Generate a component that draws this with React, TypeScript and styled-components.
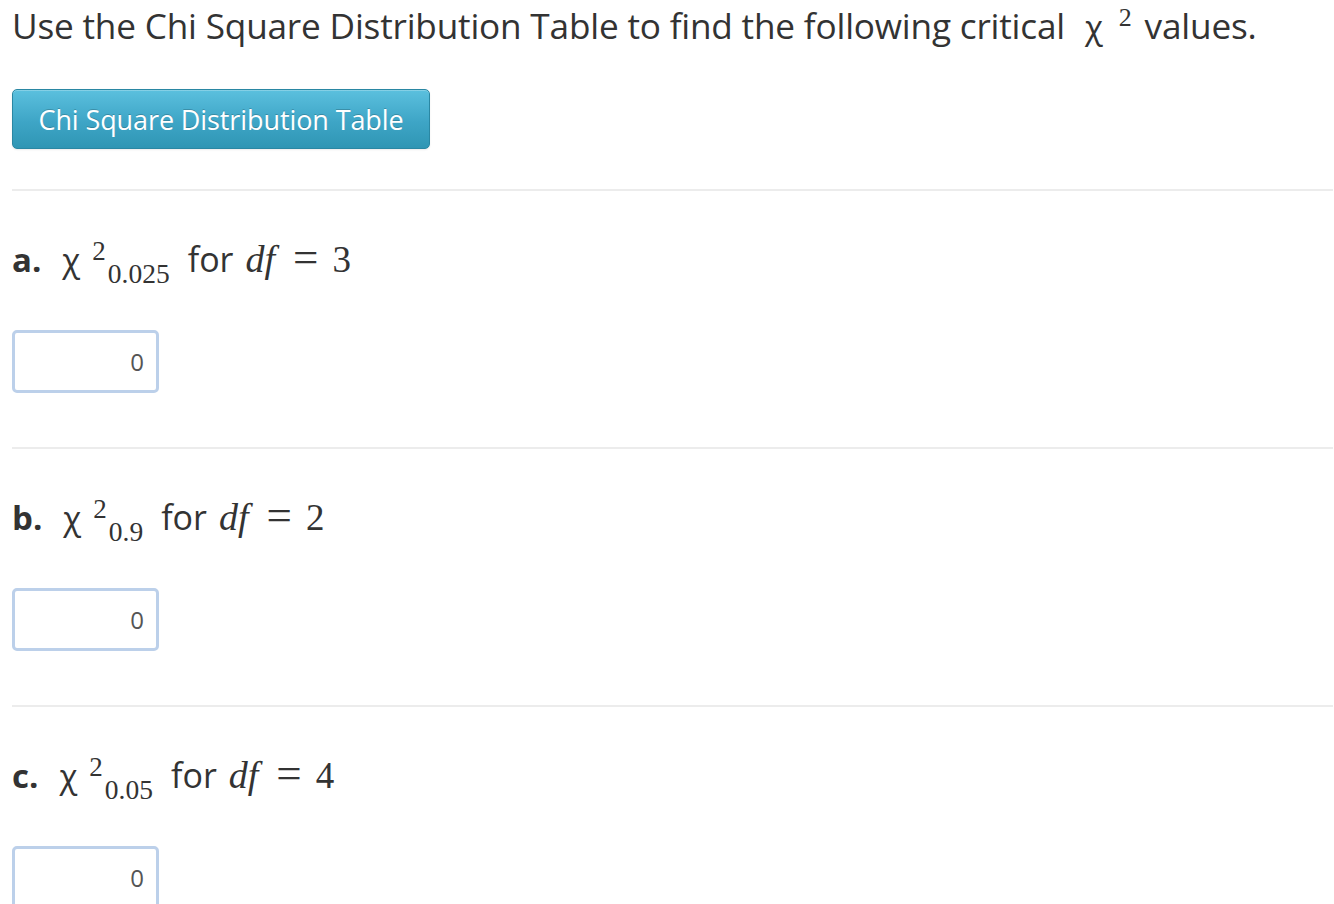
import styled, { createGlobalStyle } from "styled-components";

const GlobalStyle = createGlobalStyle`
  html, body {
    margin: 0;
    padding: 0;
    background: #fff;
  }
  body {
    font-family: "Open Sans", "Liberation Sans", sans-serif;
    color: #333;
  }
`;

const Page = styled.div`
  padding: 0 1px 0 12px;
  box-sizing: border-box;
`;

const Title = styled.h1`
  margin: 0;
  padding-top: 3px;
  font-size: 35.2px;
  font-weight: 400;
  line-height: 44px;
  color: #333;
  letter-spacing: -0.2px;
  display: flex;
  align-items: baseline;
  white-space: nowrap;
`;

const TableButton = styled.button`
  margin-top: 36px;
  width: 418px;
  height: 60px;
  border: 1px solid #2a87a3;
  border-radius: 5px;
  background: linear-gradient(to bottom, #5bc0de 0%, #3ea5c6 55%, #2f96b4 100%);
  box-shadow: inset 0 1px 0 rgba(255, 255, 255, 0.25), 0 1px 2px rgba(0, 0, 0, 0.08);
  color: #fff;
  font-family: "Open Sans", "Liberation Sans", sans-serif;
  font-size: 27px;
  letter-spacing: -0.1px;
  text-shadow: 0 -1px 0 rgba(0, 0, 0, 0.2);
  cursor: pointer;
  padding: 0;
  display: block;
`;

const Section = styled.section<{ $first?: boolean }>`
  border-top: 2px solid #ececec;
  margin-top: ${(p) => (p.$first ? "40px" : "0")};
  padding: 44px 0 54px;
`;

const Question = styled.div`
  display: flex;
  align-items: baseline;
  height: 44px;
  font-size: 34px;
  color: #333;
  white-space: nowrap;
`;

const Letter = styled.b`
  font-weight: 700;
  font-size: 33px;
  margin-right: 21px;
`;

const Chi = styled.span`
  font-family: "Open Sans", "DejaVu Sans", sans-serif;
  font-size: 33px;
`;

const Sup = styled.span`
  font-family: "Liberation Serif", serif;
  font-size: 27px;
  position: relative;
  top: -12px;
  margin-left: 12px;
`;

const Sub = styled.span`
  font-family: "Liberation Serif", serif;
  font-size: 27.5px;
  position: relative;
  top: 11px;
  margin-left: 2px;
  margin-right: 18px;
`;

const ForWord = styled.span`
  margin-right: 12px;
`;

const MathVar = styled.span`
  font-family: "Liberation Serif", serif;
  font-style: italic;
  font-size: 38px;
`;

const MathOp = styled.span`
  font-family: "Liberation Serif", serif;
  font-size: 45px;
  line-height: 1;
  margin: 0 14px 0 18px;
`;

const MathNum = styled.span`
  font-family: "Liberation Serif", serif;
  font-size: 37px;
`;

const AnswerInput = styled.input`
  display: block;
  margin-top: 51px;
  width: 147px;
  height: 63px;
  box-sizing: border-box;
  border: 3px solid #bcd0ea;
  border-radius: 5px;
  background: #fff;
  text-align: right;
  padding: 0 12px 0 8px;
  font-family: "Open Sans", "Liberation Sans", sans-serif;
  font-size: 24px;
  color: #555;
  outline: none;
`;

const TitleChi = styled.span`
  font-family: "Open Sans", "DejaVu Sans", sans-serif;
  font-size: 33px;
  margin-left: 20px;
`;

const TitleSup = styled.span`
  font-family: "Liberation Serif", serif;
  font-size: 26px;
  position: relative;
  top: -13px;
  margin-left: 16px;
  margin-right: 13px;
`;

type Item = { letter: string; sub: string; df: number };

const items: Item[] = [
  { letter: "a.", sub: "0.025", df: 3 },
  { letter: "b.", sub: "0.9", df: 2 },
  { letter: "c.", sub: "0.05", df: 4 },
];

export default function App() {
  return (
    <>
      <GlobalStyle />
      <Page>
        <Title>
          Use the Chi Square Distribution Table to find the following critical
          <TitleChi>χ</TitleChi>
          <TitleSup>2</TitleSup>
          values.
        </Title>
        <TableButton type="button">Chi Square Distribution Table</TableButton>
        {items.map((it, i) => (
          <Section key={it.letter} $first={i === 0}>
            <Question>
              <Letter>{it.letter}</Letter>
              <Chi>χ</Chi>
              <Sup>2</Sup>
              <Sub>{it.sub}</Sub>
              <ForWord>for</ForWord>
              <MathVar>df</MathVar>
              <MathOp>=</MathOp>
              <MathNum>{it.df}</MathNum>
            </Question>
            <AnswerInput defaultValue="0" />
          </Section>
        ))}
      </Page>
    </>
  );
}
